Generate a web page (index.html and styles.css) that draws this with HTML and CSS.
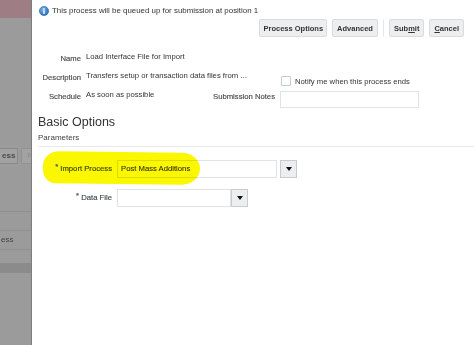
FILE: index.html
```html
<!DOCTYPE html>
<html>
<head>
<meta charset="utf-8">
<link rel="stylesheet" href="styles.css">
</head>
<body>
<div class="page">
  <div class="backdrop">
    <div class="bd-top"></div>
    <div class="bd-space1"></div>
    <div class="bd-buttons">
      <span class="bd-btn bd-btn-a">ess</span>
      <span class="bd-btn bd-btn-b">Re</span>
    </div>
    <div class="bd-space2"></div>
    <div class="bd-line"></div>
    <div class="bd-row"></div>
    <div class="bd-line"></div>
    <div class="bd-row bd-text">ess</div>
    <div class="bd-line"></div>
    <div class="bd-gap"></div>
    <div class="bd-band"></div>
  </div>
  <div class="dialog">
    <div class="info">
      <svg class="info-icon" width="10" height="10" viewBox="0 0 10 10">
        <defs>
          <radialGradient id="ig" cx="40%" cy="35%" r="65%">
            <stop offset="0" stop-color="#7fb6e8"/>
            <stop offset="1" stop-color="#2a6fb8"/>
          </radialGradient>
        </defs>
        <circle cx="5" cy="5" r="4.6" fill="url(#ig)" stroke="#2563a6" stroke-width="0.6"/>
        <circle cx="5" cy="2.9" r="0.8" fill="#fff"/>
        <rect x="4.3" y="4.2" width="1.4" height="3.7" fill="#fff"/>
      </svg>
      <span class="info-text">This process will be queued up for submission at position 1</span>
    </div>
    <div class="toolbar">
      <button class="btn">Process Options</button>
      <button class="btn">Advanced</button>
      <span class="tb-sep"></span>
      <button class="btn">Sub<u>m</u>it</button>
      <button class="btn"><u>C</u>ancel</button>
    </div>
    <div class="form">
      <div class="lbl">Name</div>
      <div class="val span2">Load Interface File for Import</div>
      <div class="empty"></div>

      <div class="lbl">Description</div>
      <div class="val span2">Transfers setup or transaction data files from ...</div>
      <div class="notify"><span class="checkbox"></span><span>Notify me when this process ends</span></div>

      <div class="lbl">Schedule</div>
      <div class="val">As soon as possible</div>
      <div class="lbl">Submission Notes</div>
      <div class="field"><span class="textbox"></span></div>
    </div>
    <h2 class="section-title">Basic Options</h2>
    <div class="subtitle">Parameters</div>
    <div class="params">
      <div class="highlight"></div>
      <div class="plbl"><span class="req">*</span> Import Process</div>
      <div class="pfield">
        <span class="select wide">Post Mass Additions</span>
        <span class="dd gap"><svg width="6" height="4" viewBox="0 0 6 4"><path d="M0 0 H6 L3 4 Z" fill="#111"/></svg></span>
      </div>
      <div class="plbl"><span class="req">*</span> Data File</div>
      <div class="pfield">
        <span class="select narrow"></span>
        <span class="dd"><svg width="6" height="4" viewBox="0 0 6 4"><path d="M0 0 H6 L3 4 Z" fill="#111"/></svg></span>
      </div>
    </div>
  </div>
</div>
</body>
</html>
```
FILE: styles.css
```css
* { box-sizing: border-box; }
html, body { margin: 0; padding: 0; }
body {
  width: 474px;
  height: 345px;
  overflow: hidden;
  font-family: "Liberation Sans", Arial, sans-serif;
  background: #fff;
}
.page {
  display: flex;
  height: 345px;
}
.backdrop {
  width: 32px;
  flex: none;
  background: #9b9b9b;
  border-right: 1px solid #7d7d7d;
  display: flex;
  flex-direction: column;
  overflow: hidden;
}
.bd-top { height: 18px; background: #9e7e84; }
.bd-space1 { height: 130px; }
.bd-buttons {
  height: 16px;
  display: flex;
  gap: 3px;
  margin-left: -3px;
}
.bd-btn {
  font-size: 8px;
  line-height: 14px;
  border: 1px solid #8a8a8a;
  background: #a2a2a2;
  color: #4a4a4a;
  font-weight: bold;
  padding: 0 2px 0 4px;
  white-space: nowrap;
}
.bd-btn-b { color: #8b8b8b; font-weight: normal; padding-left: 5px; border-color: #929292; }
.bd-space2 { height: 47px; }
.bd-line { height: 1px; background: #8f8f8f; }
.bd-row { height: 18px; }
.bd-text { font-size: 8px; line-height: 18px; color: #444; padding-left: 1px; }
.bd-gap { height: 13px; }
.bd-band { height: 10px; background: #8b8b8b; }

.dialog {
  flex: 1;
  background: #fff;
  position: relative;
  display: flex;
  flex-direction: column;
}
.info {
  display: flex;
  align-items: center;
  height: 13px;
  margin-top: 4px;
  padding-left: 6px;
}
.info-icon { flex: none; margin-right: 3px; margin-left: 1px; }
.info-text { font-size: 7.9px; color: #333; white-space: nowrap; }

.toolbar {
  display: flex;
  justify-content: flex-end;
  align-items: center;
  margin-top: 2px;
  padding-right: 10px;
  gap: 5px;
}
.btn {
  font-family: inherit;
  font-size: 7.5px;
  font-weight: bold;
  color: #333;
  background: #eceef0;
  border: 1px solid #d8dcdf;
  border-radius: 2px;
  height: 18px;
  padding: 0 4px;
  margin: 0;
}
.btn:first-child { padding: 0 3px; }
.tb-sep { width: 1px; height: 16px; background: #e4e6e8; }

.form {
  display: grid;
  grid-template-columns: 49px 120px 64px 139px;
  grid-auto-rows: 19px;
  column-gap: 5px;
  margin-top: 14px;
  font-size: 7.7px;
  color: #333;
}
.lbl {
  text-align: right;
  padding-top: 3px;
  line-height: 10px;
  color: #4a4a4a;
  white-space: nowrap;
  -webkit-text-stroke: 0.15px #4a4a4a;
}
.val { line-height: 10px; padding-top: 1px; white-space: nowrap; }
.span2 { grid-column: span 2; }
.notify {
  display: flex;
  align-items: center;
  gap: 4px;
  padding-top: 5px;
  padding-left: 1px;
  height: 17px;
  white-space: nowrap;
  font-size: 7.7px;
}
.checkbox {
  width: 10px;
  height: 10px;
  border: 1px solid #c6ccd0;
  border-radius: 1px;
  background: #fff;
  flex: none;
}
.field { padding-top: 2px; }
.textbox {
  display: block;
  width: 139px;
  height: 17px;
  border: 1px solid #dfe3e6;
}

.section-title {
  margin: 7px 0 0 6px;
  font-size: 12.5px;
  font-weight: normal;
  color: #333;
  line-height: 14px;
}
.subtitle {
  margin: 4px 0 0 6px;
  font-size: 8px;
  color: #444;
  line-height: 10px;
  padding-bottom: 3px;
  border-bottom: 1px solid #e6e8ea;
}
.params {
  position: relative;
  display: grid;
  grid-template-columns: 80px 1fr;
  grid-auto-rows: 29px;
  column-gap: 5px;
  margin-top: 13px;
  font-size: 7.7px;
}
.highlight {
  position: absolute;
  left: 11px;
  top: -8px;
  width: 157px;
  height: 32px;
  background: #fbf700;
  border-radius: 16px 18px 18px 12px / 14px 16px 16px 14px;
  transform: rotate(0.6deg);
  mix-blend-mode: multiply;
  pointer-events: none;
}
.plbl {
  text-align: right;
  color: #3f4a4f;
  line-height: 18px;
  white-space: nowrap;
  -webkit-text-stroke: 0.15px #3f4a4f;
}
.req { color: #2f5a8a; position: relative; top: -2px; }
.pfield { display: flex; align-items: flex-start; }
.select {
  display: block;
  height: 18px;
  border: 1px solid #e0e4e7;
  line-height: 16px;
  padding-left: 3px;
  color: #333;
  white-space: nowrap;
  -webkit-text-stroke: 0.1px #333;
}
.select.wide { width: 160px; }
.select.narrow { width: 114px; }
.dd {
  display: flex;
  align-items: center;
  justify-content: center;
  width: 17px;
  height: 18px;
  border: 1px solid #c7ccd0;
  background: #eceef0;
}
.dd.gap { margin-left: 3px; }
```
